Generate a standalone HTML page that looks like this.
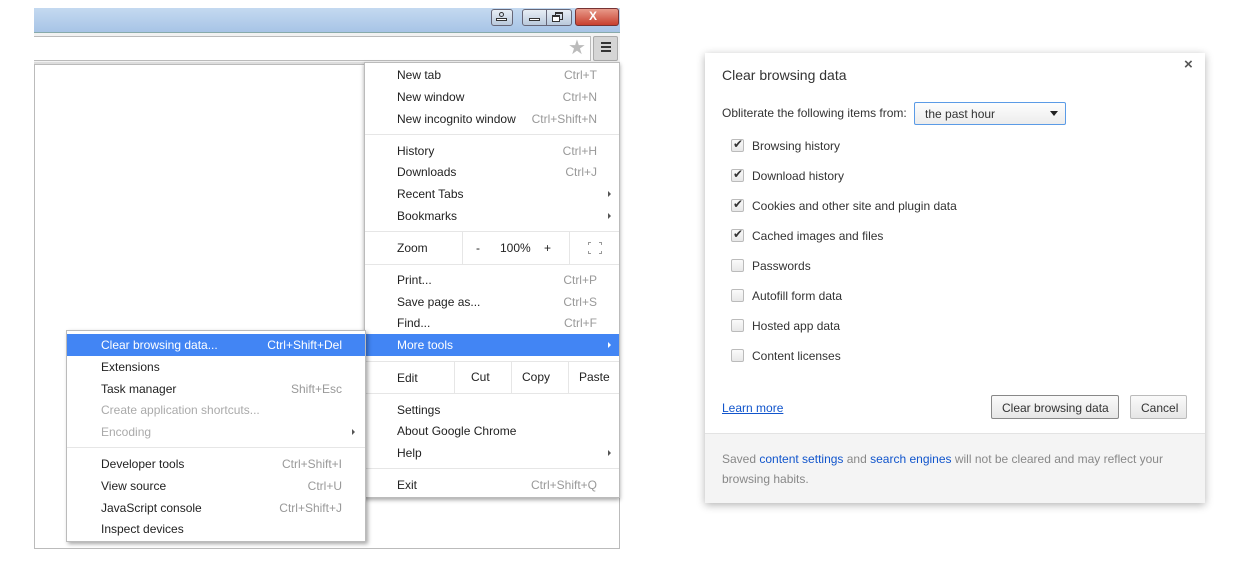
<!DOCTYPE html>
<html><head><style>
*{margin:0;padding:0;box-sizing:border-box}
body{width:1238px;height:564px;background:#fff;font-family:"Liberation Sans",sans-serif;font-size:12px;color:#222;position:relative;overflow:hidden}
.abs{position:absolute}
.t{position:absolute;white-space:nowrap;line-height:14px}
.sc{position:absolute;white-space:nowrap;color:#999;line-height:14px;text-align:right}
.sep{position:absolute;height:1px;background:#e6e6e6}
.dis{color:#aaa}
.arr{position:absolute;width:0;height:0;border-top:3px solid transparent;border-bottom:3px solid transparent;border-left:3px solid #555}
.cb{position:absolute;left:731px;width:13px;height:13px;border:1px solid #bbb;border-radius:2px;background:linear-gradient(#fafafa,#e8e8e8)}
.lbl{position:absolute;left:752px;font-size:12px;color:#333;line-height:14px}
</style></head><body>
<!-- browser window -->
<div class="abs" style="left:34px;top:8px;width:586px;height:541px;border:1px solid #bbb;background:#fff"></div>
<div class="abs" style="left:34px;top:8px;width:586px;height:25px;background:linear-gradient(#c4d9f0,#a7c4e6);border-bottom:1px solid #8aa"></div>
<div class="abs" style="left:491px;top:9px;width:22px;height:17px;border:1px solid #667;border-radius:3px;background:linear-gradient(#e8eef5,#b9c9dc)"></div>
<div class="abs" style="left:499px;top:12px;width:5px;height:5px;border:1px solid #333;border-radius:50%"></div>
<div class="abs" style="left:496px;top:18px;width:11px;height:3px;border:1px solid #333;background:#fff"></div>
<div class="abs" style="left:522px;top:9px;width:50px;height:17px;border:1px solid #667;border-radius:3px;background:linear-gradient(#e8eef5,#b9c9dc)"></div>
<div class="abs" style="left:546px;top:9px;width:1px;height:17px;background:#667"></div>
<div class="abs" style="left:529px;top:18px;width:11px;height:3px;border:1px solid #333;background:#fff"></div>
<div class="abs" style="left:555px;top:12px;width:8px;height:8px;border:1px solid #333;border-top-width:2px"></div>
<div class="abs" style="left:552px;top:15px;width:8px;height:7px;border:1px solid #333;border-top-width:2px;background:#fff"></div>
<div class="abs" style="left:575px;top:8px;width:44px;height:18px;border:1px solid #733;border-radius:3px;background:linear-gradient(#e89a8a,#c8402f)"></div>
<div class="t" style="left:589px;top:9px;color:#fff;font-weight:bold;font-size:12px">X</div>
<div class="abs" style="left:34px;top:33px;width:586px;height:30px;background:#f2f2f2"></div>
<div class="abs" style="left:34px;top:36px;width:557px;height:25px;background:#fff;border:1px solid #bbb;border-left:none"></div>
<div class="t" style="left:568px;top:38px;font-size:20px;color:#bbb;line-height:20px">★</div>
<div class="abs" style="left:593px;top:36px;width:25px;height:25px;background:#d5d5d5;border:1px solid #aaa;border-radius:2px"></div>
<div class="abs" style="left:601px;top:42px;width:10px;height:2px;background:#333;box-shadow:0 4px 0 #333,0 8px 0 #333"></div>
<div class="abs" style="left:34px;top:62px;width:330px;height:3px;background:#ddd;border-bottom:1px solid #bbb"></div>

<!-- main menu -->
<div class="abs" style="left:364px;top:62px;width:256px;height:436px;background:#fff;border:1px solid #bbb;box-shadow:0 2px 4px rgba(0,0,0,.35)"></div>
<div class="t" style="left:397px;top:68px">New tab</div><div class="sc" style="right:641px;top:68px">Ctrl+T</div>
<div class="t" style="left:397px;top:90px">New window</div><div class="sc" style="right:641px;top:90px">Ctrl+N</div>
<div class="t" style="left:397px;top:112px">New incognito window</div><div class="sc" style="right:641px;top:112px">Ctrl+Shift+N</div>
<div class="sep" style="left:365px;top:134px;width:254px"></div>
<div class="t" style="left:397px;top:144px">History</div><div class="sc" style="right:641px;top:144px">Ctrl+H</div>
<div class="t" style="left:397px;top:165px">Downloads</div><div class="sc" style="right:641px;top:165px">Ctrl+J</div>
<div class="t" style="left:397px;top:187px">Recent Tabs</div><div class="arr" style="left:608px;top:191px"></div>
<div class="t" style="left:397px;top:209px">Bookmarks</div><div class="arr" style="left:608px;top:213px"></div>
<div class="sep" style="left:365px;top:231px;width:254px"></div>
<div class="t" style="left:397px;top:241px">Zoom</div>
<div class="abs" style="left:462px;top:232px;width:1px;height:32px;background:#e6e6e6"></div>
<div class="t" style="left:476px;top:241px">-</div><div class="t" style="left:500px;top:241px">100%</div><div class="t" style="left:544px;top:241px">+</div>
<div class="abs" style="left:569px;top:232px;width:1px;height:32px;background:#e6e6e6"></div>
<div class="abs" style="left:588px;top:242px;width:14px;height:12px;border:1px dashed #999"></div>
<div class="abs" style="left:591px;top:240px;width:8px;height:16px;background:#fff"></div>
<div class="abs" style="left:586px;top:245px;width:18px;height:6px;background:#fff"></div>
<div class="sep" style="left:365px;top:264px;width:254px"></div>
<div class="t" style="left:397px;top:273px">Print...</div><div class="sc" style="right:641px;top:273px">Ctrl+P</div>
<div class="t" style="left:397px;top:295px">Save page as...</div><div class="sc" style="right:641px;top:295px">Ctrl+S</div>
<div class="t" style="left:397px;top:316px">Find...</div><div class="sc" style="right:641px;top:316px">Ctrl+F</div>
<div class="abs" style="left:365px;top:334px;width:254px;height:22px;background:#4285f4"></div>
<div class="t" style="left:397px;top:338px;color:#fff">More tools</div>
<div class="arr" style="left:608px;top:342px;border-left-color:#fff"></div>
<div class="sep" style="left:365px;top:361px;width:254px"></div>
<div class="t" style="left:397px;top:371px">Edit</div>
<div class="abs" style="left:454px;top:362px;width:1px;height:31px;background:#e6e6e6"></div>
<div class="t" style="left:471px;top:370px">Cut</div>
<div class="abs" style="left:511px;top:362px;width:1px;height:31px;background:#e6e6e6"></div>
<div class="t" style="left:522px;top:370px">Copy</div>
<div class="abs" style="left:568px;top:362px;width:1px;height:31px;background:#e6e6e6"></div>
<div class="t" style="left:579px;top:370px">Paste</div>
<div class="sep" style="left:365px;top:393px;width:254px"></div>
<div class="t" style="left:397px;top:403px">Settings</div>
<div class="t" style="left:397px;top:424px">About Google Chrome</div>
<div class="t" style="left:397px;top:446px">Help</div><div class="arr" style="left:608px;top:450px"></div>
<div class="sep" style="left:365px;top:468px;width:254px"></div>
<div class="t" style="left:397px;top:478px">Exit</div><div class="sc" style="right:641px;top:478px">Ctrl+Shift+Q</div>

<!-- submenu -->
<div class="abs" style="left:66px;top:330px;width:300px;height:212px;background:#fff;border:1px solid #bbb;box-shadow:2px 2px 4px rgba(0,0,0,.35)"></div>
<div class="abs" style="left:67px;top:334px;width:298px;height:22px;background:#4285f4"></div>
<div class="t" style="left:101px;top:338px;color:#fff">Clear browsing data...</div><div class="sc" style="right:896px;top:338px;color:#fff">Ctrl+Shift+Del</div>
<div class="t" style="left:101px;top:360px">Extensions</div>
<div class="t" style="left:101px;top:382px">Task manager</div><div class="sc" style="right:896px;top:382px">Shift+Esc</div>
<div class="t dis" style="left:101px;top:403px">Create application shortcuts...</div>
<div class="t dis" style="left:101px;top:425px">Encoding</div><div class="arr" style="left:352px;top:429px"></div>
<div class="sep" style="left:67px;top:447px;width:298px"></div>
<div class="t" style="left:101px;top:457px">Developer tools</div><div class="sc" style="right:896px;top:457px">Ctrl+Shift+I</div>
<div class="t" style="left:101px;top:479px">View source</div><div class="sc" style="right:896px;top:479px">Ctrl+U</div>
<div class="t" style="left:101px;top:501px">JavaScript console</div><div class="sc" style="right:896px;top:501px">Ctrl+Shift+J</div>
<div class="t" style="left:101px;top:522px">Inspect devices</div>

<!-- dialog -->
<div class="abs" style="left:705px;top:53px;width:500px;height:450px;background:#fff;box-shadow:0 2px 8px rgba(0,0,0,.3)"></div>
<div class="t" style="left:722px;top:67px;font-size:14px;color:#333;line-height:16px">Clear browsing data</div>
<div class="t" style="left:1184px;top:58px;font-size:15px;color:#555;font-weight:bold">×</div>
<div class="t" style="left:722px;top:106px;color:#333">Obliterate the following items from:</div>
<div class="abs" style="left:914px;top:102px;width:152px;height:23px;border:1px solid #5b9be6;border-radius:2px;background:linear-gradient(#fdfdfd,#ececec)"></div>
<div class="t" style="left:925px;top:107px;color:#333">the past hour</div>
<div class="abs" style="left:1050px;top:111px;border-left:4px solid transparent;border-right:4px solid transparent;border-top:5px solid #222"></div>
<div class="cb" style="top:139px"></div><div class="t" style="left:733px;top:137px;font-size:12px;color:#333">✔</div><div class="lbl" style="top:139px">Browsing history</div>
<div class="cb" style="top:169px"></div><div class="t" style="left:733px;top:167px;font-size:12px;color:#333">✔</div><div class="lbl" style="top:169px">Download history</div>
<div class="cb" style="top:199px"></div><div class="t" style="left:733px;top:197px;font-size:12px;color:#333">✔</div><div class="lbl" style="top:199px">Cookies and other site and plugin data</div>
<div class="cb" style="top:229px"></div><div class="t" style="left:733px;top:227px;font-size:12px;color:#333">✔</div><div class="lbl" style="top:229px">Cached images and files</div>
<div class="cb" style="top:259px"></div><div class="lbl" style="top:259px">Passwords</div>
<div class="cb" style="top:289px"></div><div class="lbl" style="top:289px">Autofill form data</div>
<div class="cb" style="top:319px"></div><div class="lbl" style="top:319px">Hosted app data</div>
<div class="cb" style="top:349px"></div><div class="lbl" style="top:349px">Content licenses</div>
<div class="t" style="left:722px;top:401px;color:#15c;text-decoration:underline">Learn more</div>
<div class="abs" style="left:991px;top:395px;width:128px;height:24px;border:1px solid #888;border-radius:2px;background:linear-gradient(#fafafa,#e6e6e6)"></div>
<div class="t" style="left:1002px;top:401px;color:#333">Clear browsing data</div>
<div class="abs" style="left:1130px;top:395px;width:57px;height:24px;border:1px solid #bbb;border-radius:2px;background:linear-gradient(#fafafa,#e6e6e6)"></div>
<div class="t" style="left:1141px;top:401px;color:#333">Cancel</div>
<div class="abs" style="left:705px;top:433px;width:500px;height:70px;background:#f4f4f4;border-top:1px solid #e3e3e3"></div>
<div class="t" style="left:722px;top:452px;color:#888">Saved <span style="color:#15c">content settings</span> and <span style="color:#15c">search engines</span> will not be cleared and may reflect your</div>
<div class="t" style="left:722px;top:472px;color:#888">browsing habits.</div>
</body></html>
